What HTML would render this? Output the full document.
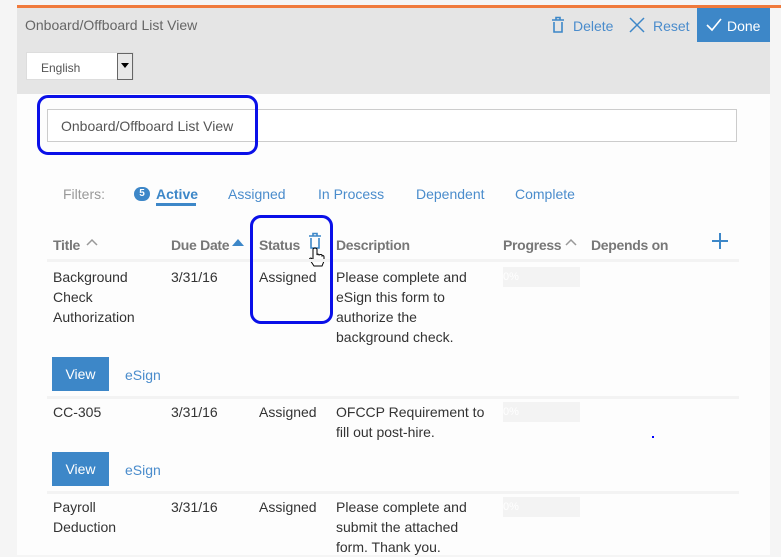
<!DOCTYPE html>
<html><head><meta charset="utf-8"><style>
body{margin:0;width:781px;height:555px;overflow:hidden;background:#f5f5f5;font-family:"Liberation Sans",sans-serif;position:relative;color:#333}
.a{position:absolute}
.t{font-size:14px;line-height:20px;color:#333;white-space:nowrap}
.h{font-size:14px;font-weight:bold;color:#777;letter-spacing:-0.3px}
.lnk{color:#4a8ccc;font-size:14px}
.view{background:#3d87c8;color:#fff;font-size:14px;width:57px;height:34px;line-height:34px;text-align:center}
.sep{left:47px;width:692px;height:3px;background:#f3f3f3}
.prog{width:77px;height:20px;background:#f3f3f3;color:#fff;font-size:11px;line-height:20px}
</style></head><body>
<div class="a" style="left:17px;top:5px;width:764px;height:3px;background:#f07a3c"></div>
<div class="a" style="left:17px;top:8px;width:753px;height:86px;background:#e5e5e5"></div>
<div class="a" style="left:17px;top:94px;width:753px;height:461px;background:#fdfdfd"></div>
<div class="a" style="left:25px;top:17px;font-size:14px;color:#666">Onboard/Offboard List View</div>
<svg class="a" style="left:551px;top:16px" width="14" height="18" viewBox="0 0 14 18"><path d="M1 4H13M5 4V1.5H9V4M3 6V16H11V6" fill="none" stroke="#3d87c8" stroke-width="1.6"/></svg>
<div class="a lnk" style="left:573px;top:18px">Delete</div>
<svg class="a" style="left:629px;top:17px" width="16" height="16"><path d="M1 1L15 15M15 1L1 15" stroke="#3d87c8" stroke-width="1.5"/></svg>
<div class="a lnk" style="left:653px;top:18px">Reset</div>
<div class="a" style="left:697px;top:8px;width:73px;height:34px;background:#3d87c8"></div>
<svg class="a" style="left:706px;top:18px" width="16" height="14"><path d="M1 7L6 12L15 1" fill="none" stroke="#fff" stroke-width="1.6"/></svg>
<div class="a" style="left:727px;top:18px;color:#fff;font-size:14px">Done</div>
<div class="a" style="left:26px;top:52px;width:108px;height:28px;background:#fff;border:1px solid #ddd;box-sizing:border-box"></div>
<div class="a" style="left:41px;top:61px;font-size:12px;color:#555">English</div>
<div class="a" style="left:117px;top:53px;width:16px;height:27px;background:#e8e8e8;border:1px solid #666;box-sizing:border-box"></div>
<div class="a" style="left:121px;top:63px;width:0;height:0;border-left:4px solid transparent;border-right:4px solid transparent;border-top:5px solid #000"></div>
<div class="a" style="left:47px;top:109px;width:690px;height:33px;border:1px solid #ccc;background:#fff;box-sizing:border-box"></div>
<div class="a" style="left:61px;top:118px;font-size:14px;color:#555">Onboard/Offboard List View</div>
<div class="a" style="left:37px;top:95px;width:221px;height:60px;border:3px solid #0a10e8;border-radius:11px;box-sizing:border-box"></div>
<div class="a" style="left:63px;top:186px;font-size:14px;color:#999">Filters:</div>
<div class="a" style="left:134px;top:187px;width:16px;height:14px;border-radius:7px;background:#3d87c8;color:#fff;font-size:10px;line-height:14px;text-align:center;font-weight:bold">5</div>
<div class="a" style="left:156px;top:186px;font-size:14px;font-weight:bold;color:#3d87c8">Active</div>
<div class="a" style="left:156px;top:203px;width:40px;height:3px;background:#3d87c8"></div>
<div class="a lnk" style="left:228px;top:186px">Assigned</div>
<div class="a lnk" style="left:318px;top:186px">In Process</div>
<div class="a lnk" style="left:416px;top:186px">Dependent</div>
<div class="a lnk" style="left:515px;top:186px">Complete</div>
<div class="a h" style="left:53px;top:237px">Title</div>
<svg class="a" style="left:86px;top:238px" width="12" height="8"><path d="M1 7L6 2L11 7" fill="none" stroke="#999" stroke-width="1.5"/></svg>
<div class="a h" style="left:171px;top:237px">Due Date</div>
<div class="a" style="left:232px;top:239px;border-left:6px solid transparent;border-right:6px solid transparent;border-bottom:7px solid #3d87c8"></div>
<div class="a h" style="left:259px;top:237px">Status</div>
<svg class="a" style="left:308px;top:232px" width="14" height="18" viewBox="0 0 14 18"><path d="M1 4H13M5 4V1.5H9V4M3 6V16H11V6" fill="none" stroke="#3d87c8" stroke-width="1.6"/></svg>
<svg class="a" style="left:308px;top:247px" width="18" height="22"><path d="M5 2V13L3 11Q1 11 2 13L6 19H14L16 14V10Q16 8 14 9V8Q13 7 11 8Q10 6 9 8V2Q7 0 5 2Z" fill="#fff" stroke="#000" stroke-width="1"/></svg>
<div class="a h" style="left:336px;top:237px">Description</div>
<div class="a h" style="left:503px;top:237px">Progress</div>
<svg class="a" style="left:565px;top:238px" width="12" height="8"><path d="M1 7L6 2L11 7" fill="none" stroke="#999" stroke-width="1.5"/></svg>
<div class="a h" style="left:591px;top:237px">Depends on</div>
<svg class="a" style="left:711px;top:232px" width="18" height="18"><path d="M9 1V17M1 9H17" stroke="#3d87c8" stroke-width="2"/></svg>
<div class="a sep" style="top:259px"></div>
<div class="a" style="left:250px;top:215px;width:83px;height:109px;border:3px solid #0a10e8;border-radius:11px;box-sizing:border-box"></div>

<div class="a t" style="left:53px;top:267px">Background<br>Check<br>Authorization</div>
<div class="a t" style="left:171px;top:267px">3/31/16</div>
<div class="a t" style="left:259px;top:267px">Assigned</div>
<div class="a t" style="left:336px;top:267px">Please complete and<br>eSign this form to<br>authorize the<br>background check.</div>
<div class="a prog" style="left:503px;top:267px">0%</div>
<div class="a view" style="left:52px;top:357px">View</div>
<div class="a lnk" style="left:125px;top:367px">eSign</div>
<div class="a sep" style="top:396px"></div>

<div class="a t" style="left:53px;top:402px">CC-305</div>
<div class="a t" style="left:171px;top:402px">3/31/16</div>
<div class="a t" style="left:259px;top:402px">Assigned</div>
<div class="a t" style="left:336px;top:402px">OFCCP Requirement to<br>fill out post-hire.</div>
<div class="a prog" style="left:503px;top:402px">0%</div>
<div class="a" style="left:652px;top:436px;width:2px;height:2px;background:#00f"></div>
<div class="a view" style="left:52px;top:452px">View</div>
<div class="a lnk" style="left:125px;top:462px">eSign</div>
<div class="a sep" style="top:491px"></div>

<div class="a t" style="left:53px;top:497px">Payroll<br>Deduction</div>
<div class="a t" style="left:171px;top:497px">3/31/16</div>
<div class="a t" style="left:259px;top:497px">Assigned</div>
<div class="a t" style="left:336px;top:497px">Please complete and<br>submit the attached<br>form. Thank you.</div>
<div class="a prog" style="left:503px;top:497px">0%</div>
</body></html>
